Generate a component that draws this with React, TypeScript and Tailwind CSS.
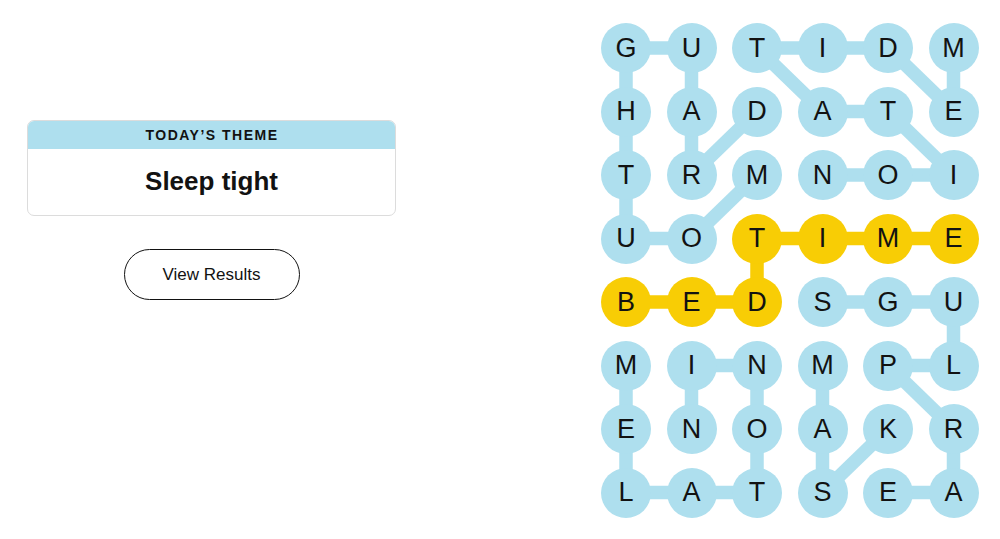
const BLUE = "#aedfee";
const YELLOW = "#f8cd05";

const board = [
  "GUTIDM",
  "HADATE",
  "TRMNOI",
  "UOTIME",
  "BEDSGU",
  "MINMPL",
  "ENOAKR",
  "LATSEA",
];

// words as paths of [row, col]
const words: { path: [number, number][]; spangram?: boolean }[] = [
  { path: [[2, 2], [3, 1], [3, 0], [2, 0], [1, 0], [0, 0], [0, 1], [1, 1], [2, 1], [1, 2]] },
  { path: [[0, 5], [1, 5], [0, 4], [0, 3], [0, 2], [1, 3], [1, 4], [2, 5], [2, 4], [2, 3]] },
  { path: [[4, 0], [4, 1], [4, 2], [3, 2], [3, 3], [3, 4], [3, 5]], spangram: true },
  { path: [[7, 4], [7, 5], [6, 5], [5, 4], [5, 5], [4, 5], [4, 4], [4, 3]] },
  { path: [[5, 3], [6, 3], [7, 3], [6, 4]] },
  { path: [[5, 0], [6, 0], [7, 0], [7, 1], [7, 2], [6, 2], [5, 2], [5, 1], [6, 1]] },
];

const COL = 65.5;
const ROW = 63.5;
const cx = (c: number) => 25 + COL * c;
const cy = (r: number) => 25 + ROW * r;

function isSpangram(r: number, c: number) {
  return words.some((w) => w.spangram && w.path.some(([pr, pc]) => pr === r && pc === c));
}

function Board() {
  return (
    <div className="relative">
      <svg className="absolute inset-0" width={378} height={495} aria-hidden>
        {words.map((w, i) =>
          w.path.slice(1).map(([r, c], j) => {
            const [pr, pc] = w.path[j];
            return (
              <line
                key={`${i}-${j}`}
                x1={cx(pc)}
                y1={cy(pr)}
                x2={cx(c)}
                y2={cy(r)}
                stroke={w.spangram ? YELLOW : BLUE}
                strokeWidth={13.5}
              />
            );
          }),
        )}
      </svg>
      <div className="relative grid grid-cols-[repeat(6,50px)] gap-x-[15.5px] gap-y-[13.5px]">
        {board.map((row, r) =>
          row.split("").map((ch, c) => (
            <div
              key={`${r}-${c}`}
              className={`flex h-[50px] w-[50px] items-center justify-center rounded-full text-[27px] leading-none text-[#121212] ${isSpangram(r, c) ? "bg-[#f8cd05]" : "bg-[#aedfee]"}`}
            >
              {ch}
            </div>
          )),
        )}
      </div>
    </div>
  );
}

export default function App() {
  return (
    <div className="flex h-[539px] w-[1000px] overflow-hidden bg-white font-['Liberation_Sans',Arial,sans-serif] text-black">
      <section className="flex w-[423px] flex-col items-center pl-[27px] pr-[27px] pt-[120px]">
        <div className="w-[369px] overflow-hidden rounded-[7px] border border-[#dcdcdc]">
          <div className="flex h-[28px] items-center justify-center bg-[#aedfee] pl-[1px] text-[14px] font-bold tracking-[1.5px] text-[#121212]">
            TODAY’S THEME
          </div>
          <div className="flex h-[66px] items-center justify-center pb-[2px] text-[26px] font-bold text-[#121212]">
            Sleep tight
          </div>
        </div>
        <button className="mt-[33px] flex h-[51px] w-[176px] items-center justify-center rounded-full border border-[#121212] text-[17px] text-[#121212]">
          View Results
        </button>
      </section>
      <section className="ml-[178px] pt-[23px]">
        <Board />
      </section>
    </div>
  );
}
